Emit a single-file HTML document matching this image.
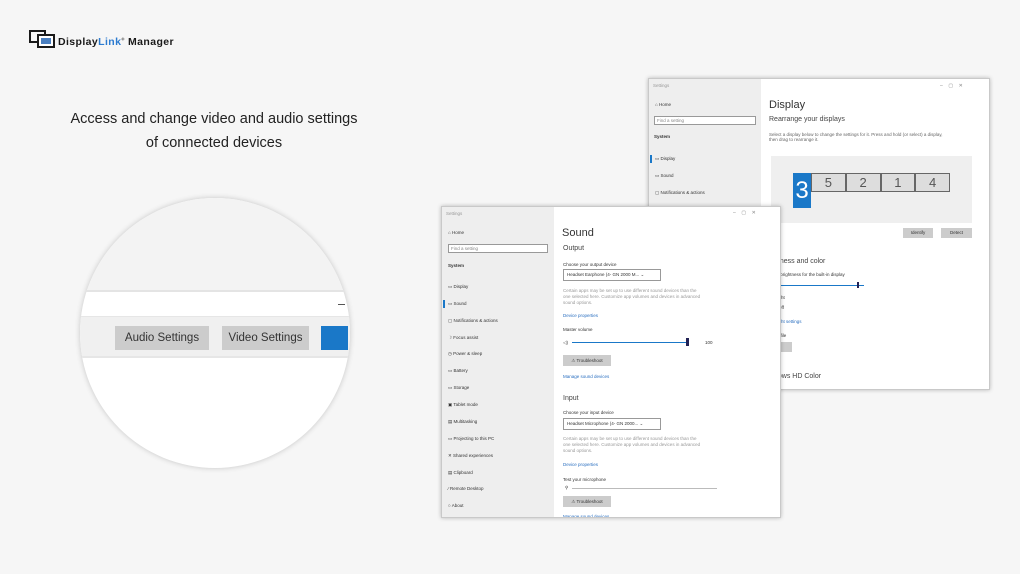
<!DOCTYPE html>
<html><head><meta charset="utf-8"><style>
*{margin:0;padding:0;box-sizing:border-box}
body{width:1020px;height:574px;background:#f6f6f6;font-family:"Liberation Sans",sans-serif;position:relative;overflow:hidden}
.a{position:absolute;white-space:nowrap}
.win{position:absolute;background:#fff;border:1px solid #c9c9c9;box-shadow:0 0 4px rgba(0,0,0,.25);overflow:hidden}
.side{position:absolute;left:0;top:0;bottom:0;background:#eeeeee}
.s{font-size:4.5px;color:#333}
.g{font-size:4.5px;color:#999}
.l{font-size:4.5px;color:#2a6fc0}
.h{font-size:11px;color:#333}
.h2{font-size:7px;color:#444}
.btn{position:absolute;background:#ccc;font-size:4.5px;color:#333;text-align:center}
.dd{position:absolute;border:1px solid #999;font-size:4.5px;color:#333;padding:2px 3px;background:#fff}
</style></head><body>

<!-- logo -->
<svg class="a" style="left:29px;top:30px" width="32" height="20" viewBox="0 0 32 20">
<rect x="1" y="1" width="15" height="11" fill="none" stroke="#1a1a1a" stroke-width="2"/>
<rect x="9" y="5" width="16" height="12" fill="#fff" stroke="#1a1a1a" stroke-width="2"/>
<rect x="12" y="8" width="10" height="6" fill="#4a7fc0"/>
</svg>
<div class="a" style="left:58px;top:36px;font-size:10.5px;font-weight:bold;color:#1a1a1a;letter-spacing:0.4px">Display<span style="color:#2c7bd0">Link</span><sup style="font-size:4px">®</sup> Manager</div>

<div class="a" style="left:0;width:428px;top:107px;text-align:center;font-size:14.5px;color:#222;line-height:24px">Access and change video and audio settings<br>of connected devices</div>

<!-- circle -->
<div class="a" style="left:80px;top:198px;width:270px;height:270px;border-radius:50%;overflow:hidden;background:#fff;box-shadow:0 0 6px rgba(0,0,0,.2)">
 <div class="a" style="left:0;top:0;width:270px;height:94px;background:#f3f3f3;border-bottom:2px solid #e4e4e4"></div>
 <div class="a" style="left:0;top:118px;width:270px;height:42px;background:#f0f0f0;border-bottom:2px solid #e6e6e6;border-top:1px solid #e6e6e6"></div>
 <div class="a" style="left:258px;top:106px;width:7px;height:1px;background:#555"></div>
 <div class="a" style="left:35px;top:128px;width:94px;height:24px;background:#ccc;font-size:11.5px;color:#333;text-align:center;line-height:24px">Audio Settings</div>
 <div class="a" style="left:142px;top:128px;width:87px;height:24px;background:#ccc;font-size:11.5px;color:#333;text-align:center;line-height:24px">Video Settings</div>
 <div class="a" style="left:241px;top:128px;width:27px;height:24px;background:#1a78c8"></div>
</div>

<!-- display window -->
<div class="win" style="left:648px;top:78px;width:342px;height:312px">
 <div class="side" style="width:112px"></div>
 <div class="a g" style="left:4px;top:4px">Settings</div>
 <div class="a s" style="left:6px;top:23px">⌂ Home</div>
 <div class="a" style="left:5px;top:37px;width:102px;height:9px;border:1px solid #999;background:#fff;font-size:4.5px;color:#888;padding:1px 2px">Find a setting</div>
 <div class="a s" style="left:5px;top:55px;font-weight:bold">System</div>
 <div class="a" style="left:1px;top:76px;width:2px;height:8px;background:#1a78c8"></div>
 <div class="a s" style="left:6px;top:77px">▭ Display</div>
 <div class="a s" style="left:6px;top:94px">▭ Sound</div>
 <div class="a s" style="left:6px;top:111px">▢ Notifications &amp; actions</div>
 <div class="a" style="left:291px;top:4px;font-size:5px;color:#888">–&nbsp;&nbsp;&nbsp;&nbsp;▢&nbsp;&nbsp;&nbsp;&nbsp;✕</div>
 <div class="a h" style="left:120px;top:20px">Display</div>
 <div class="a h2" style="left:120px;top:37px">Rearrange your displays</div>
 <div class="a g" style="left:120px;top:53px;color:#666">Select a display below to change the settings for it. Press and hold (or select) a display,<br>then drag to rearrange it.</div>
 <div class="a" style="left:122px;top:77px;width:201px;height:67px;background:#efefef"></div>
 <div class="a" style="left:144px;top:94px;width:18px;height:35px;background:#1a78c8;color:#fff;font-size:24px;text-align:center;line-height:35px">3</div>
 <div class="a" style="left:162px;top:94px;width:139px;height:19px;display:flex">
  <div style="flex:1;border:1px solid #666;background:#ddd;font-size:13px;color:#555;text-align:center;line-height:17px">5</div>
  <div style="flex:1;border:1px solid #666;background:#ddd;font-size:13px;color:#555;text-align:center;line-height:17px">2</div>
  <div style="flex:1;border:1px solid #666;background:#ddd;font-size:13px;color:#555;text-align:center;line-height:17px">1</div>
  <div style="flex:1;border:1px solid #666;background:#ddd;font-size:13px;color:#555;text-align:center;line-height:17px">4</div>
 </div>
 <div class="btn" style="left:254px;top:149px;width:30px;height:10px;line-height:10px">Identify</div>
 <div class="btn" style="left:292px;top:149px;width:31px;height:10px;line-height:10px">Detect</div>
 <div class="a h2" style="left:125px;top:179px">htness and color</div>
 <div class="a s" style="left:125px;top:193px">ge brightness for the built-in display</div>
 <div class="a" style="left:125px;top:206px;width:90px;height:1px;background:#1a78c8"></div>
 <div class="a" style="left:208px;top:203px;width:2px;height:6px;background:#225"></div>
 <div class="a s" style="left:125px;top:216px">t light</div>
 <div class="a s" style="left:125px;top:226px">○ Off</div>
 <div class="a l" style="left:125px;top:240px">t light settings</div>
 <div class="a s" style="left:125px;top:254px">profile</div>
 <div class="a" style="left:125px;top:263px;width:18px;height:10px;background:#ccc"></div>
 <div class="a h2" style="left:125px;top:294px">dows HD Color</div>
</div>

<!-- sound window -->
<div class="win" style="left:441px;top:206px;width:340px;height:312px">
 <div class="side" style="width:112px"></div>
 <div class="a g" style="left:4px;top:4px">Settings</div>
 <div class="a" style="left:291px;top:3px;font-size:5px;color:#888">–&nbsp;&nbsp;&nbsp;&nbsp;▢&nbsp;&nbsp;&nbsp;&nbsp;✕</div>
 <div class="a s" style="left:6px;top:23px">⌂ Home</div>
 <div class="a" style="left:6px;top:37px;width:100px;height:9px;border:1px solid #999;background:#fff;font-size:4.5px;color:#888;padding:1px 2px">Find a setting</div>
 <div class="a s" style="left:6px;top:56px;font-weight:bold">System</div>
 <div class="a s" style="left:6px;top:77px">▭ Display</div>
 <div class="a" style="left:1px;top:93px;width:2px;height:8px;background:#1a78c8"></div>
 <div class="a s" style="left:6px;top:94px">▭ Sound</div>
 <div class="a s" style="left:6px;top:111px">▢ Notifications &amp; actions</div>
 <div class="a s" style="left:6px;top:128px">☽ Focus assist</div>
 <div class="a s" style="left:6px;top:144px">◷ Power &amp; sleep</div>
 <div class="a s" style="left:6px;top:161px">▭ Battery</div>
 <div class="a s" style="left:6px;top:178px">▭ Storage</div>
 <div class="a s" style="left:6px;top:195px">▣ Tablet mode</div>
 <div class="a s" style="left:6px;top:212px">▤ Multitasking</div>
 <div class="a s" style="left:6px;top:229px">▭ Projecting to this PC</div>
 <div class="a s" style="left:6px;top:246px">✕ Shared experiences</div>
 <div class="a s" style="left:6px;top:263px">▤ Clipboard</div>
 <div class="a s" style="left:6px;top:279px">⁄ Remote Desktop</div>
 <div class="a s" style="left:6px;top:296px">○ About</div>

 <div class="a h" style="left:120px;top:20px">Sound</div>
 <div class="a h2" style="left:121px;top:38px">Output</div>
 <div class="a s" style="left:121px;top:55px">Choose your output device</div>
 <div class="dd" style="left:121px;top:62px;width:98px;height:12px">Headset Earphone (4- GN 2000 M... ⌄</div>
 <div class="a g" style="left:121px;top:81px;line-height:6px">Certain apps may be set up to use different sound devices than the<br>one selected here. Customize app volumes and devices in advanced<br>sound options.</div>
 <div class="a l" style="left:121px;top:106px">Device properties</div>
 <div class="a s" style="left:121px;top:120px">Master volume</div>
 <div class="a s" style="left:121px;top:133px">◁)</div>
 <div class="a" style="left:130px;top:135px;width:115px;height:1px;background:#1a78c8"></div>
 <div class="a" style="left:244px;top:131px;width:3px;height:8px;background:#225"></div>
 <div class="a s" style="left:263px;top:133px">100</div>
 <div class="btn" style="left:121px;top:148px;width:48px;height:11px;line-height:11px">⚠ Troubleshoot</div>
 <div class="a l" style="left:121px;top:167px">Manage sound devices</div>
 <div class="a h2" style="left:121px;top:188px">Input</div>
 <div class="a s" style="left:121px;top:203px">Choose your input device</div>
 <div class="dd" style="left:121px;top:211px;width:98px;height:12px">Headset Microphone (4- GN 2000... ⌄</div>
 <div class="a g" style="left:121px;top:229px;line-height:6px">Certain apps may be set up to use different sound devices than the<br>one selected here. Customize app volumes and devices in advanced<br>sound options.</div>
 <div class="a l" style="left:121px;top:255px">Device properties</div>
 <div class="a s" style="left:121px;top:270px">Test your microphone</div>
 <div class="a s" style="left:123px;top:278px">⚲</div>
 <div class="a" style="left:130px;top:281px;width:145px;height:1px;background:#bbb"></div>
 <div class="btn" style="left:121px;top:289px;width:48px;height:11px;line-height:11px">⚠ Troubleshoot</div>
 <div class="a l" style="left:121px;top:307px">Manage sound devices</div>
</div>
</body></html>
